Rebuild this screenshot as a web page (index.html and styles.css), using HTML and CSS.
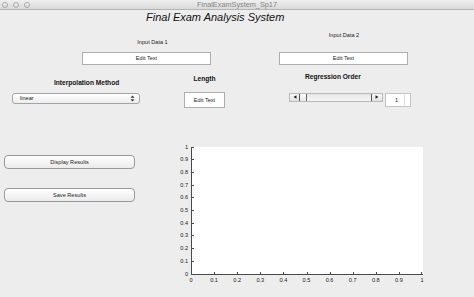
FILE: index.html
```html
<!DOCTYPE html>
<html>
<head>
<meta charset="utf-8">
<link rel="stylesheet" href="styles.css">
</head>
<body>
<div class="window">
  <header class="titlebar">
    <div class="lights"><span class="light"></span><span class="light"></span><span class="light"></span></div>
    <div class="wintitle">FinalExamSystem_Sp17</div>
    <div></div>
  </header>
  <h1 class="app-title">Final Exam Analysis System</h1>

  <section class="row-inputs">
    <div class="field field-1">
      <div class="caption">Input Data 1</div>
      <div class="edit wide">Edit Text</div>
    </div>
    <div class="field field-2">
      <div class="caption">Input Data 2</div>
      <div class="edit wide">Edit Text</div>
    </div>
  </section>

  <section class="row-controls">
    <div class="ctl ctl-interp">
      <div class="label-bold">Interpolation Method</div>
      <div class="popup">
        <span>linear</span>
        <svg class="popup-arrows" width="5" height="7" viewBox="0 0 5 7"><path d="M2.5 0.5 L4.5 2.8 L0.5 2.8 Z M2.5 6.5 L4.5 4.2 L0.5 4.2 Z" fill="#333"/></svg>
      </div>
    </div>
    <div class="ctl ctl-length">
      <div class="label-bold">Length</div>
      <div class="edit small">Edit Text</div>
    </div>
    <div class="ctl ctl-order">
      <div class="label-bold">Regression Order</div>
      <div class="slider-row">
        <div class="slider">
          <div class="sl-btn"><svg width="4" height="4" viewBox="0 0 4 4"><path d="M0.5 2 L3.5 0.3 L3.5 3.7 Z" fill="#222"/></svg></div>
          <div class="sl-thumb"></div>
          <div class="sl-track"></div>
          <div class="sl-btn"><svg width="4" height="4" viewBox="0 0 4 4"><path d="M3.5 2 L0.5 0.3 L0.5 3.7 Z" fill="#222"/></svg></div>
        </div>
        <div class="edit order"><span>1</span><i class="order-line"></i></div>
      </div>
    </div>
  </section>

  <section class="row-main">
    <div class="buttons">
      <button class="btn btn-display">Display Results</button>
      <button class="btn btn-save">Save Results</button>
    </div>
    <div class="axes">
      <div class="plot">
        <div class="axis-y"></div>
        <div class="axis-x"></div>
        <i class="ytick" style="top:127px"></i><span class="ylab" style="top:127px">0</span>
        <i class="ytick" style="top:114.3px"></i><span class="ylab" style="top:114.3px">0.1</span>
        <i class="ytick" style="top:101.6px"></i><span class="ylab" style="top:101.6px">0.2</span>
        <i class="ytick" style="top:88.9px"></i><span class="ylab" style="top:88.9px">0.3</span>
        <i class="ytick" style="top:76.2px"></i><span class="ylab" style="top:76.2px">0.4</span>
        <i class="ytick" style="top:63.5px"></i><span class="ylab" style="top:63.5px">0.5</span>
        <i class="ytick" style="top:50.8px"></i><span class="ylab" style="top:50.8px">0.6</span>
        <i class="ytick" style="top:38.1px"></i><span class="ylab" style="top:38.1px">0.7</span>
        <i class="ytick" style="top:25.4px"></i><span class="ylab" style="top:25.4px">0.8</span>
        <i class="ytick" style="top:12.7px"></i><span class="ylab" style="top:12.7px">0.9</span>
        <i class="ytick" style="top:0px"></i><span class="ylab" style="top:0px">1</span>

        <i class="xtick" style="left:0px"></i><span class="xlab" style="left:0px">0</span>
        <i class="xtick" style="left:23.1px"></i><span class="xlab" style="left:23.1px">0.1</span>
        <i class="xtick" style="left:46.2px"></i><span class="xlab" style="left:46.2px">0.2</span>
        <i class="xtick" style="left:69.3px"></i><span class="xlab" style="left:69.3px">0.3</span>
        <i class="xtick" style="left:92.4px"></i><span class="xlab" style="left:92.4px">0.4</span>
        <i class="xtick" style="left:115.5px"></i><span class="xlab" style="left:115.5px">0.5</span>
        <i class="xtick" style="left:138.6px"></i><span class="xlab" style="left:138.6px">0.6</span>
        <i class="xtick" style="left:161.7px"></i><span class="xlab" style="left:161.7px">0.7</span>
        <i class="xtick" style="left:184.8px"></i><span class="xlab" style="left:184.8px">0.8</span>
        <i class="xtick" style="left:207.9px"></i><span class="xlab" style="left:207.9px">0.9</span>
        <i class="xtick" style="left:230px"></i><span class="xlab" style="left:231px">1</span>
      </div>
    </div>
  </section>
</div>
</body>
</html>
```

FILE: styles.css
```css
html, body {
  margin: 0;
  padding: 0;
  background: #ececec;
}
body {
  font-family: "Liberation Sans", Arial, sans-serif;
  color: #222;
}
.window {
  width: 474px;
  height: 297px;
  overflow: hidden;
  background: #ededed;
}

/* title bar */
.titlebar {
  height: 10px;
  box-sizing: border-box;
  display: grid;
  grid-template-columns: 1fr auto 1fr;
  align-items: center;
  background: linear-gradient(#efefef, #d9d9d9);
  border-bottom: 1px solid #b4b4b4;
}
.lights {
  display: flex;
  gap: 5px;
  padding-left: 2px;
}
.light {
  width: 6px;
  height: 6px;
  border-radius: 50%;
  box-sizing: border-box;
  border: 1px solid #a9a9a9;
  background: linear-gradient(#f4f4f4, #d6d6d6);
}
.wintitle {
  font-size: 7.3px;
  line-height: 9px;
  color: #858585;
}

.app-title {
  margin: 0;
  padding: 1px 0 0 146px;
  font-size: 11px;
  line-height: 13px;
  font-style: italic;
  font-weight: normal;
  color: #111;
}

/* input row */
.row-inputs {
  display: flex;
  align-items: flex-end;
  gap: 68px;
  padding-left: 82px;
  margin-top: 8px;
}
.field {
  width: 129px;
  display: flex;
  flex-direction: column;
  align-items: center;
}
.caption {
  font-size: 5.6px;
  line-height: 7px;
  color: #222;
}
.field-1 .caption { margin-bottom: 6px; margin-left: 12px; }
.field-2 .caption { margin-bottom: 12.5px; margin-left: 1px; }

.edit {
  box-sizing: border-box;
  background: #fff;
  border: 1px solid #adadad;
  font-size: 5.6px;
  color: #222;
  display: flex;
  align-items: center;
  justify-content: center;
}
.edit.wide {
  width: 129px;
  height: 13px;
}
.edit.small {
  width: 41px;
  height: 16px;
}

/* controls row */
.row-controls {
  display: flex;
  align-items: flex-start;
  height: 45px;
}
.label-bold {
  font-size: 6.6px;
  line-height: 8px;
  font-weight: bold;
  color: #111;
  white-space: nowrap;
}
.ctl-interp {
  margin-left: 12px;
  width: 128px;
}
.ctl-interp .label-bold {
  margin-top: 14px;
  padding-left: 42px;
}
.popup {
  margin-top: 6px;
  height: 11px;
  box-sizing: border-box;
  border: 1px solid #a4a4a4;
  border-radius: 3px;
  background: linear-gradient(#ffffff, #ededed);
  display: flex;
  align-items: center;
  justify-content: space-between;
  padding: 0 4px 0 7px;
  font-size: 5.6px;
  color: #222;
}
.popup-arrows { display: block; }

.ctl-length {
  margin-left: 44px;
  width: 41px;
  display: flex;
  flex-direction: column;
  align-items: center;
}
.ctl-length .label-bold {
  margin-top: 10px;
}
.ctl-length .edit {
  margin-top: 9px;
}

.ctl-order {
  margin-left: 64px;
  width: 122px;
}
.ctl-order .label-bold {
  margin-top: 8px;
  padding-left: 16px;
}
.slider-row {
  margin-top: 12px;
  display: flex;
  align-items: flex-start;
}
.slider {
  width: 94px;
  height: 9px;
  box-sizing: border-box;
  border: 1px solid #b8b8b8;
  background: linear-gradient(#e6e6e6, #f6f6f6);
  display: flex;
}
.sl-btn {
  width: 9px;
  display: flex;
  align-items: center;
  justify-content: center;
  background: linear-gradient(#fafafa, #e2e2e2);
}
.sl-btn:first-child { border-right: 1px solid #555; }
.sl-btn:last-child { border-left: 1px solid #555; width: 10px; }
.sl-thumb {
  width: 6px;
  border-right: 1px solid #666;
  background: linear-gradient(#fdfdfd, #e8e8e8);
}
.sl-track {
  flex: 1;
}
.edit.order {
  margin-left: 2px;
  width: 26px;
  height: 14px;
  justify-content: flex-start;
  padding-left: 9px;
  border-color: #c4c4c4;
  gap: 6px;
}
.order-line {
  width: 1px;
  height: 10px;
  background: #d6d6d6;
}

/* main row */
.row-main {
  display: flex;
  align-items: flex-start;
}
.buttons {
  margin-left: 4px;
  width: 131px;
  display: flex;
  flex-direction: column;
}
.btn {
  font-family: "Liberation Sans", Arial, sans-serif;
  font-size: 5.6px;
  color: #222;
  height: 14px;
  padding: 0;
  box-sizing: border-box;
  border: 1px solid #999;
  border-radius: 4px;
  background: linear-gradient(#ffffff, #ebebeb);
}
.btn-display { margin-top: 45px; }
.btn-save { margin-top: 19px; }

.axes {
  margin-left: 56px;
  margin-top: 37px;
}
.plot {
  position: relative;
  width: 232px;
  height: 128px;
  background: #fff;
}
.axis-y {
  position: absolute;
  left: 0;
  top: 0;
  bottom: 0;
  width: 1px;
  background: #4a4a4a;
}
.axis-x {
  position: absolute;
  left: 0;
  right: 0;
  bottom: 0;
  height: 1px;
  background: #4a4a4a;
}
.ytick {
  position: absolute;
  left: 1px;
  width: 2px;
  height: 1px;
  background: #4a4a4a;
}
.xtick {
  position: absolute;
  top: 125px;
  width: 1px;
  height: 2px;
  background: #4a4a4a;
}
.ylab {
  position: absolute;
  right: 100%;
  margin-right: 3px;
  font-size: 5.6px;
  line-height: 6px;
  transform: translateY(-50%);
  color: #222;
}
.xlab {
  position: absolute;
  top: 130px;
  font-size: 5.6px;
  line-height: 6px;
  transform: translateX(-50%);
  color: #222;
}
```
